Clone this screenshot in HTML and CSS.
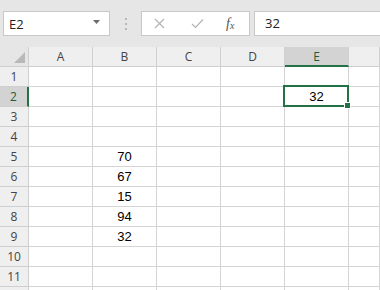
FILE: index.html
```html
<!DOCTYPE html>
<html>
<head>
<meta charset="utf-8">
<link rel="stylesheet" href="styles.css">
</head>
<body>
<div class="app">
  <div class="toolbar">
    <div class="namebox">
      <span class="name">E2</span>
      <svg class="caret" width="7" height="4" viewBox="0 0 7 4"><path d="M0 0H7L3.5 4Z" fill="#6b6b6b"/></svg>
    </div>
    <div class="grip"><i></i><i></i><i></i></div>
    <div class="buttons">
      <svg class="btn" width="11" height="11" viewBox="0 0 11 11"><path d="M1 1L10 10M10 1L1 10" stroke="#b4b4b4" stroke-width="1.2" fill="none"/></svg>
      <svg class="btn" width="13" height="11" viewBox="0 0 13 11"><path d="M1 6L4.5 9.5L12 1.5" stroke="#b4b4b4" stroke-width="1.2" fill="none"/></svg>
      <span class="fx">f<sub>x</sub></span>
    </div>
    <div class="formula">32</div>
  </div>
  <div class="sheet">
    <div class="corner"><svg width="11" height="11" viewBox="0 0 11 11"><path d="M11 0V11H0Z" fill="#b9b9b9"/></svg></div>
    <div class="ch">A</div><div class="ch">B</div><div class="ch">C</div><div class="ch">D</div><div class="ch sel">E</div><div class="ch"></div>

    <div class="rh">1</div><div class="c"></div><div class="c"></div><div class="c"></div><div class="c"></div><div class="c"></div><div class="c"></div>
    <div class="rh sel">2</div><div class="c"></div><div class="c"></div><div class="c"></div><div class="c"></div><div class="c active">32<span class="frame"><span class="handle"></span></span></div><div class="c"></div>
    <div class="rh">3</div><div class="c"></div><div class="c"></div><div class="c"></div><div class="c"></div><div class="c"></div><div class="c"></div>
    <div class="rh">4</div><div class="c"></div><div class="c"></div><div class="c"></div><div class="c"></div><div class="c"></div><div class="c"></div>
    <div class="rh">5</div><div class="c"></div><div class="c">70</div><div class="c"></div><div class="c"></div><div class="c"></div><div class="c"></div>
    <div class="rh">6</div><div class="c"></div><div class="c">67</div><div class="c"></div><div class="c"></div><div class="c"></div><div class="c"></div>
    <div class="rh">7</div><div class="c"></div><div class="c">15</div><div class="c"></div><div class="c"></div><div class="c"></div><div class="c"></div>
    <div class="rh">8</div><div class="c"></div><div class="c">94</div><div class="c"></div><div class="c"></div><div class="c"></div><div class="c"></div>
    <div class="rh">9</div><div class="c"></div><div class="c">32</div><div class="c"></div><div class="c"></div><div class="c"></div><div class="c"></div>
    <div class="rh">10</div><div class="c"></div><div class="c"></div><div class="c"></div><div class="c"></div><div class="c"></div><div class="c"></div>
    <div class="rh">11</div><div class="c"></div><div class="c"></div><div class="c"></div><div class="c"></div><div class="c"></div><div class="c"></div>
    <div class="rh"></div><div class="c"></div><div class="c"></div><div class="c"></div><div class="c"></div><div class="c"></div><div class="c"></div>
  </div>
</div>
</body>
</html>
```
FILE: styles.css
```css
html, body {
  margin: 0;
  padding: 0;
  background: #ffffff;
  overflow: hidden;
}
.app {
  width: 380px;
  height: 290px;
  overflow: hidden;
  font-family: "Liberation Sans", Arial, sans-serif;
}
.toolbar {
  height: 47px;
  background: #e6e6e6;
  display: flex;
  align-items: flex-start;
  padding-top: 11px;
  box-sizing: border-box;
}
.namebox {
  margin-left: 3px;
  width: 107px;
  height: 25px;
  box-sizing: border-box;
  background: #fff;
  border: 1px solid #c8c8c8;
  display: flex;
  align-items: center;
  justify-content: space-between;
  padding: 0 9px 0 5px;
}
.name {
  font-family: "Open Sans", sans-serif;
  font-size: 13px;
  color: #222;
}
.caret { margin-top: -3px; }
.grip {
  width: 31px;
  height: 25px;
  display: flex;
  flex-direction: column;
  align-items: center;
  justify-content: center;
  gap: 3px;
}
.grip i {
  display: block;
  width: 2px;
  height: 2px;
  background: #b8b8b8;
}
.buttons {
  width: 109px;
  height: 25px;
  box-sizing: border-box;
  background: #fff;
  border: 1px solid #c8c8c8;
  display: flex;
  align-items: center;
  padding-left: 12px;
  gap: 26px;
}
.fx {
  font-family: "Liberation Serif", serif;
  font-style: italic;
  font-size: 14px;
  color: #555;
  margin-left: -4px;
}
.fx sub {
  font-size: 10px;
  vertical-align: -1px;
}
.formula {
  margin-left: 4px;
  flex: 1;
  height: 25px;
  box-sizing: border-box;
  background: #fff;
  border: 1px solid #c8c8c8;
  border-right: none;
  padding-left: 10px;
  font-family: "Open Sans", sans-serif;
  font-size: 13px;
  line-height: 23px;
  color: #222;
}
.sheet {
  display: grid;
  grid-template-columns: 29px 64px 64px 64px 64px 64px 1fr;
  grid-template-rows: 20px;
  grid-auto-rows: 20px;
}
.corner, .ch, .rh {
  background: #efefef;
  box-sizing: border-box;
  border-right: 1px solid #cfcfcf;
  border-bottom: 1px solid #cfcfcf;
  color: #444;
  font-family: "Open Sans", sans-serif;
  font-size: 12px;
  display: flex;
  align-items: center;
  justify-content: center;
}
.corner {
  align-items: flex-end;
  justify-content: flex-end;
  padding: 0 3px 3px 0;
  background: #e6e6e6;
}
.ch.sel {
  background: #d3d3d3;
  color: #1e5c38;
  border-bottom: 2px solid #217346;
}
.rh.sel {
  background: #d3d3d3;
  color: #1e5c38;
  border-right: 2px solid #217346;
}
.c {
  box-sizing: border-box;
  border-right: 1px solid #d4d4d4;
  border-bottom: 1px solid #d4d4d4;
  font-size: 13px;
  color: #000;
  display: flex;
  align-items: center;
  justify-content: center;
}
.active { position: relative; }
.frame {
  position: absolute;
  left: -2px;
  top: -2px;
  right: -1px;
  bottom: -1px;
  border: 2px solid #217346;
}
.handle {
  position: absolute;
  right: -4px;
  bottom: -4px;
  width: 5px;
  height: 5px;
  background: #217346;
  border: 1px solid #fff;
}
```
